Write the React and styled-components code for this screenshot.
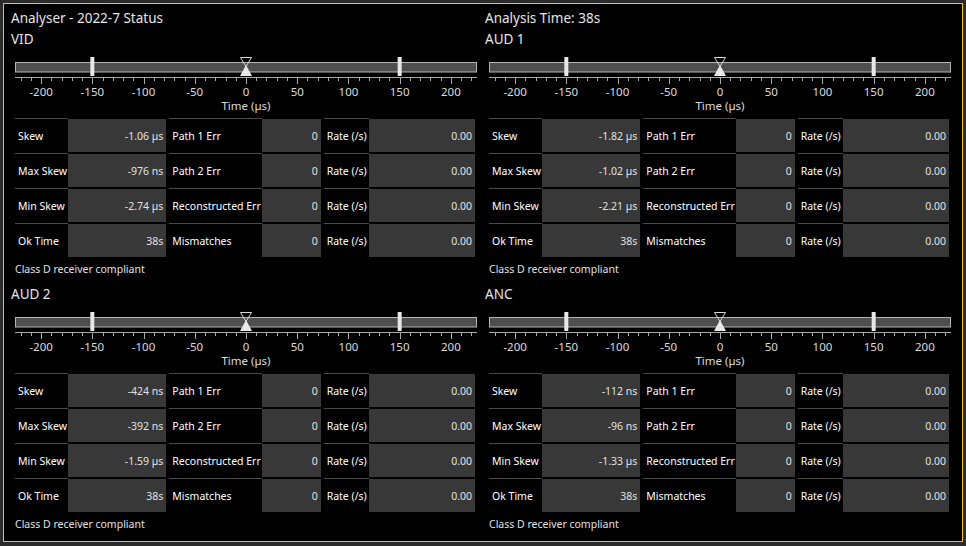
import React from "react";
import styled, { createGlobalStyle } from "styled-components";

const Global = createGlobalStyle`
  html, body { margin: 0; padding: 0; background: #2c2c2c; }
  body { font-family: "Noto Sans", "Open Sans", sans-serif; }
`;

const Frame = styled.div`
  box-sizing: border-box;
  margin: 3px 0 0 3px;
  width: 960px;
  height: 539px;
  border: 1px solid #f2c500;
  background: #000;
  padding: 5px 0 0 7px;
  overflow: hidden;
`;

const Header = styled.div`
  display: grid;
  grid-template-columns: 474px 474px;
  height: 21px;
`;

const HeaderText = styled.div`
  font-size: 13.5px;
  line-height: 18px;
  color: #e6e6e6;
`;

const Panels = styled.div`
  display: grid;
  grid-template-columns: 474px 474px;
  row-gap: 5px;
`;

const Panel = styled.section`
  display: flex;
  flex-direction: column;
`;

const PanelTitle = styled.div`
  font-size: 13.5px;
  line-height: 18px;
  color: #e6e6e6;
  height: 18px;
`;

const Body = styled.div`
  padding-left: 4px;
  display: flex;
  flex-direction: column;
`;

const ScaleSvg = styled.svg`
  display: block;
  width: 466px;
  height: 70px;
  overflow: visible;
`;

const Table = styled.div`
  width: 460px;
  display: flex;
  flex-direction: column;
`;

const Row = styled.div`
  display: flex;
  gap: 3px;
  height: 35px;
`;

const Group = styled.div`
  flex: 1 1 0;
  display: flex;
  min-width: 0;
`;

const Label = styled.div`
  box-sizing: border-box;
  width: ${(p) => p.$w}px;
  flex: none;
  border-top: 1px solid #4a4a4a;
  padding-left: 3px;
  display: flex;
  align-items: center;
  font-size: 10.5px;
  color: #fff;
  white-space: nowrap;
`;

const Value = styled.div`
  flex: 1;
  margin: 1px 0;
  background: #383838;
  display: flex;
  align-items: center;
  justify-content: flex-end;
  padding-right: 3px;
  font-size: 10.5px;
  color: #e2e2e2;
  white-space: nowrap;
`;

const Footer = styled.div`
  font-size: 10.5px;
  line-height: 22px;
  height: 22px;
  color: #e0e0e0;
`;

const sx = (u) => 0.5 + (u + 225) * (461 / 450);

function Scale() {
  const ticks = [];
  for (let u = -220; u <= 220; u += 10) ticks.push(u);
  const labels = [-200, -150, -100, -50, 0, 50, 100, 150, 200];
  const c = sx(0);
  return (
    <ScaleSvg viewBox="0 0 466 70">
      <rect x="0.5" y="14.5" width="461" height="9.5" fill="#4e4e4e" stroke="#b4b4b4" strokeWidth="1" />
      <line x1="0" y1="29.5" x2="462" y2="29.5" stroke="#a8a8a8" strokeWidth="1" />
      {ticks.map((u) => (
        <line
          key={u}
          x1={Math.round(sx(u)) + 0.5}
          x2={Math.round(sx(u)) + 0.5}
          y1="29.5"
          y2={u % 50 === 0 ? 36 : 33}
          stroke="#a8a8a8"
          strokeWidth="1"
        />
      ))}
      {[-150, 150].map((u) => (
        <rect key={u} x={sx(u) - 2} y="9" width="4" height="19" fill="#e8e8e8" />
      ))}
      <polygon points={`${c - 5.5},9.5 ${c + 5.5},9.5 ${c},18.5`} fill="none" stroke="#d8d8d8" strokeWidth="1" />
      <polygon points={`${c},17 ${c + 6},28 ${c - 6},28`} fill="#e8e8e8" />
      {labels.map((u) => (
        <text
          key={u}
          x={sx(u)}
          y="48"
          textAnchor="middle"
          fontSize="11.5"
          fill="#dcdcdc"
          fontFamily='"Noto Sans", sans-serif'
        >
          {u}
        </text>
      ))}
      <text x={c} y="62" textAnchor="middle" fontSize="11.5" fill="#dcdcdc" fontFamily='"Noto Sans", sans-serif'>
        Time (µs)
      </text>
    </ScaleSvg>
  );
}

const rowNames = [
  ["Skew", "Path 1 Err"],
  ["Max Skew", "Path 2 Err"],
  ["Min Skew", "Reconstructed Err"],
  ["Ok Time", "Mismatches"],
];

function StatusPanel({ title, values }) {
  return (
    <Panel>
      <PanelTitle>{title}</PanelTitle>
      <Body>
        <Scale />
        <Table>
          {rowNames.map(([a, b], i) => (
            <Row key={a}>
              <Group>
                <Label $w={53}>{a}</Label>
                <Value>{values[i]}</Value>
              </Group>
              <Group>
                <Label $w={93}>{b}</Label>
                <Value>0</Value>
              </Group>
              <Group>
                <Label $w={45}>Rate (/s)</Label>
                <Value>0.00</Value>
              </Group>
            </Row>
          ))}
        </Table>
        <Footer>Class D receiver compliant</Footer>
      </Body>
    </Panel>
  );
}

const panels = [
  { title: "VID", values: ["-1.06 µs", "-976 ns", "-2.74 µs", "38s"] },
  { title: "AUD 1", values: ["-1.82 µs", "-1.02 µs", "-2.21 µs", "38s"] },
  { title: "AUD 2", values: ["-424 ns", "-392 ns", "-1.59 µs", "38s"] },
  { title: "ANC", values: ["-112 ns", "-96 ns", "-1.33 µs", "38s"] },
];

export default function App() {
  return (
    <>
      <Global />
      <Frame>
        <Header>
          <HeaderText>Analyser - 2022-7 Status</HeaderText>
          <HeaderText>Analysis Time: 38s</HeaderText>
        </Header>
        <Panels>
          {panels.map((p) => (
            <StatusPanel key={p.title} {...p} />
          ))}
        </Panels>
      </Frame>
    </>
  );
}
